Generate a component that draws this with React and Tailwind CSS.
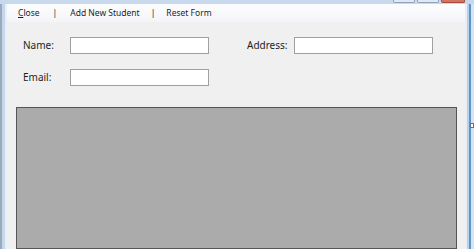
export default function App() {
  const font = { fontFamily: '"Noto Sans", "Open Sans", sans-serif' };
  return (
    <div
      className="flex h-[249px] w-[474px] flex-col overflow-hidden bg-[#c8d9ed] text-[#1e1e1e]"
      style={font}
    >
      {/* title bar remains */}
      <div className="flex h-[4px] shrink-0 justify-end gap-[2px] pr-[9px]">
        <div className="h-[3px] w-[22px] rounded-b-[2px] border-x border-b border-[#8ea3bd] bg-[#dfe8f3]" />
        <div className="h-[3px] w-[22px] rounded-b-[2px] border-x border-b border-[#8ea3bd] bg-[#dfe8f3]" />
        <div className="h-[3px] w-[24px] rounded-b-[2px] border-x border-b border-[#a44a3c] bg-[#d7725f]" />
      </div>

      <div className="flex min-h-0 flex-1">
        {/* left frame */}
        <div className="flex shrink-0">
          <div className="w-[2px] bg-[#9aa9bb]" />
          <div className="w-[3px] bg-[#c6d7ec]" />
          <div className="w-[2px] bg-[#e9eff7]" />
        </div>

        <div className="flex min-w-0 flex-1 flex-col bg-[#f0f0f0]">
          {/* menu */}
          <div className="flex h-[18px] shrink-0 items-center bg-gradient-to-b from-[#fdfdfe] to-[#f3f5f9] pt-[1px] text-[8.5px]">
            <span className="ml-[11px]">
              <span className="underline underline-offset-1">C</span>lose
            </span>
            <span className="ml-[13px]">|</span>
            <span className="ml-[13px]">Add New Student</span>
            <span className="ml-[11px]">|</span>
            <span className="ml-[11px]">Reset Form</span>
          </div>

          {/* form */}
          <div className="flex shrink-0 flex-col gap-[15px] pt-[15px] text-[10px]">
            <div className="flex items-center">
              <span className="ml-[16px] w-[47px]">Name:</span>
              <div className="h-[17px] w-[139px] border border-[#a0a0a0] bg-white" />
              <span className="ml-[38px] w-[47px]">Address:</span>
              <div className="h-[17px] w-[139px] border border-[#a0a0a0] bg-white" />
            </div>
            <div className="flex items-center">
              <span className="ml-[16px] w-[47px]">Email:</span>
              <div className="h-[17px] w-[139px] border border-[#a0a0a0] bg-white" />
            </div>
          </div>

          {/* grid area */}
          <div className="mt-[21px] flex min-h-0 flex-1 pl-[9px] pr-[8px]">
            <div className="flex-1 border border-[#555555] bg-[#ababab]" />
          </div>
        </div>

        {/* right frame */}
        <div className="relative flex shrink-0">
          <div className="w-[2px] bg-[#e9eff7]" />
          <div className="w-[2px] bg-[#b9d0ea]" />
          <div className="w-[2px] bg-[#5c95c6]" />
          <div className="w-[3px] bg-[#d5e3f2]" />
          <div className="absolute left-[5px] top-[119px] h-[5px] w-[4px] border border-[#5a7590] bg-white" />
        </div>
      </div>
    </div>
  );
}
